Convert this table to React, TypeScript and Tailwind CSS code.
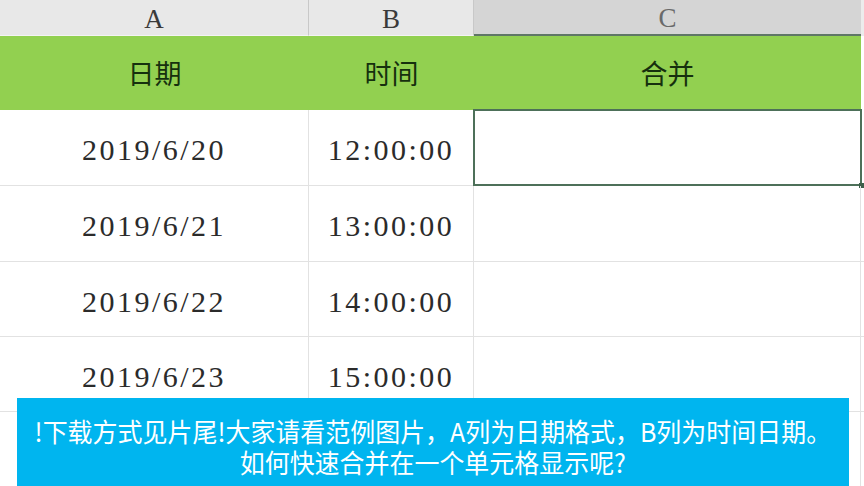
import React from "react";

const rows: [string, string, number][] = [
  ["2019/6/20", "12:00:00", 76],
  ["2019/6/21", "13:00:00", 76],
  ["2019/6/22", "14:00:00", 75],
  ["2019/6/23", "15:00:00", 75],
  ["", "", 76],
];

const serif = { fontFamily: '"Liberation Serif", "Times New Roman", serif' };
const cjk = { fontFamily: '"Noto Sans CJK SC", "Noto Sans", sans-serif' };

export default function App() {
  return (
    <div className="relative w-[864px] h-[486px] overflow-hidden bg-white">
      {/* column headers */}
      <div className="flex h-[36px]" style={serif}>
        <div className="w-[309px] bg-[#e8e8e8] border-r border-[#c8c8c8] border-b border-b-[#f4f4f4] flex items-center justify-center pt-[3px] text-[27px] text-[#3a3a3a]">
          A
        </div>
        <div className="w-[165px] bg-[#e8e8e8] border-r border-[#c8c8c8] border-b border-b-[#f4f4f4] flex items-center justify-center pt-[3px] text-[27px] text-[#3a3a3a]">
          B
        </div>
        <div className="w-[387px] bg-[#d5d5d5] border-b-2 border-[#5f7666] flex items-center justify-center pt-[3px] text-[27px] text-[#6a6a6a]">
          C
        </div>
        <div className="flex-1 bg-[#ececec]" />
      </div>

      {/* green title row */}
      <div className="flex h-[74px]" style={cjk}>
        <div className="w-[309px] bg-[#92d050] flex items-center justify-center text-[27px] text-[#16300e]">
          日期
        </div>
        <div className="w-[165px] bg-[#92d050] flex items-center justify-center text-[27px] text-[#16300e]">
          时间
        </div>
        <div className="w-[387px] bg-[#92d050] flex items-center justify-center text-[27px] text-[#16300e]">
          合并
        </div>
        <div className="flex-1 bg-white" />
      </div>

      {/* data rows */}
      {rows.map(([d, t, h], i) => (
        <div key={i} className="relative flex" style={{ height: h }}>
          <div
            className="w-[309px] border-r border-b border-[#e2e2e2] flex items-center justify-center pt-[4px] text-[30px] text-[#2b2b2b] tracking-[2.5px]"
            style={serif}
          >
            {d}
          </div>
          <div
            className="w-[165px] border-r border-b border-[#e2e2e2] flex items-center justify-center pt-[4px] text-[30px] text-[#2b2b2b] tracking-[2.5px]"
            style={serif}
          >
            {t}
          </div>
          <div className="w-[387px] border-r border-b border-[#e2e2e2]" />
          <div className="flex-1 border-b border-[#e2e2e2]" />
          {i === 0 && (
            <div className="absolute left-[473px] top-[-1px] w-[389px] h-[77px] border-2 border-[#4d7059]">
              <div className="absolute right-[-4px] bottom-[-4px] w-[5px] h-[5px] bg-[#3e5f4a]" />
            </div>
          )}
        </div>
      ))}

      {/* subtitle box */}
      <div
        className="absolute left-[17px] top-[398px] w-[832px] h-[88px] bg-[#00b5ef] flex justify-center pt-[17px] text-white text-[26px] leading-[31px]"
        style={cjk}
      >
        <p className="whitespace-nowrap text-center scale-x-[0.96]">
          !下载方式见片尾!大家请看范例图片，A列为日期格式，B列为时间日期。
          <br />
          如何快速合并在一个单元格显示呢?
        </p>
      </div>
    </div>
  );
}
